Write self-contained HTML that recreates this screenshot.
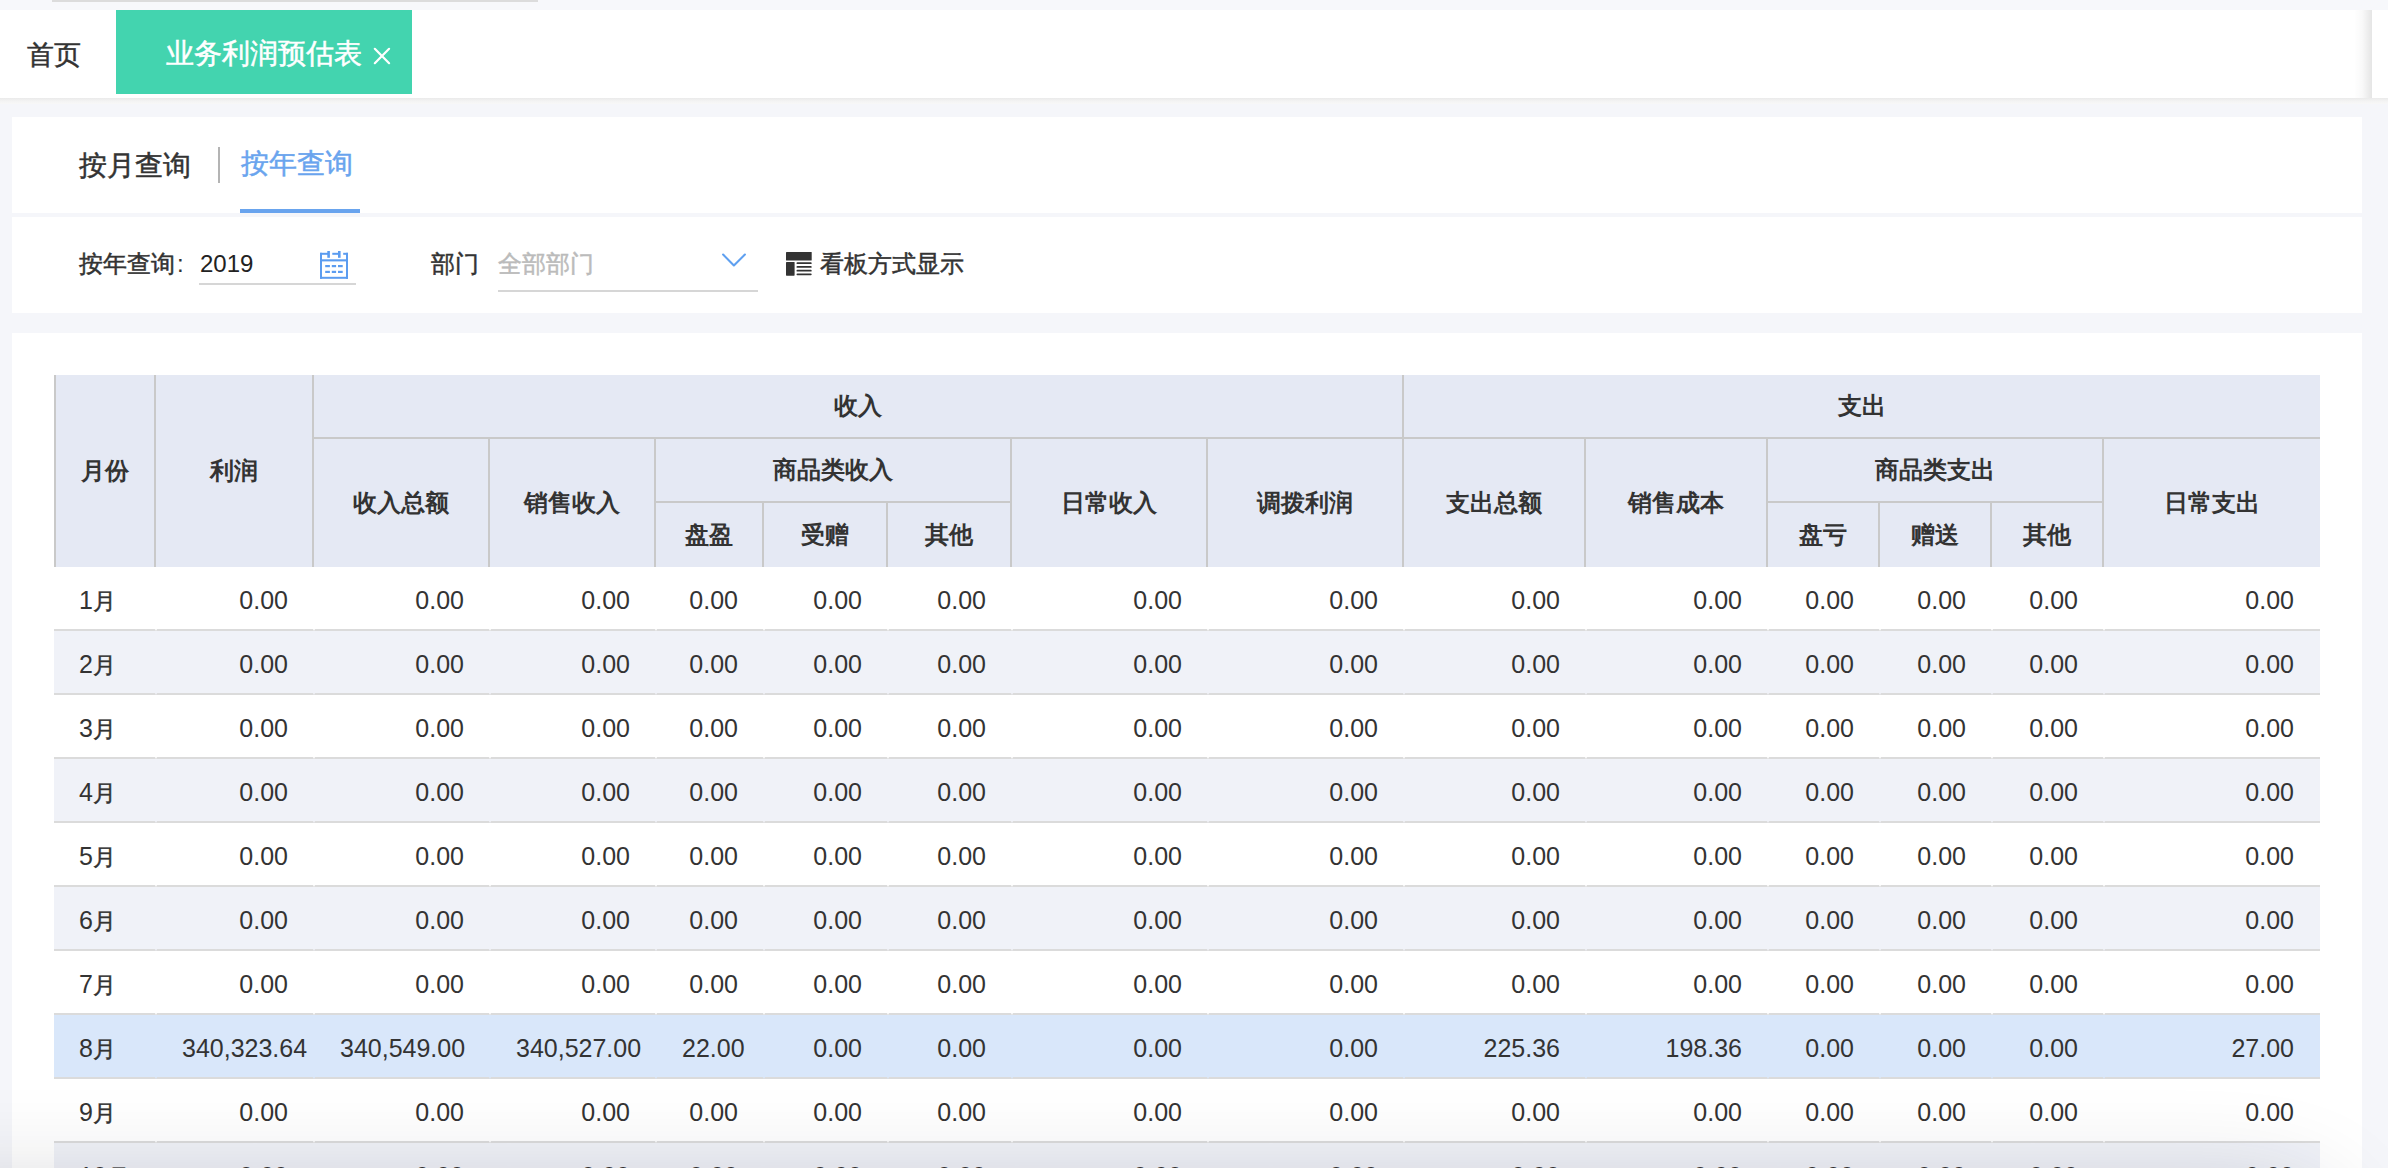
<!DOCTYPE html><html><head><meta charset="utf-8"><style>
*{margin:0;padding:0;box-sizing:border-box}
html,body{width:2388px;height:1168px;overflow:hidden;background:#f5f6fa;font-family:"Liberation Sans",sans-serif;color:#333}
.sk{-webkit-text-stroke:0.5px currentColor}
.a{position:absolute}
.topstrip{left:0;top:0;width:2388px;height:10px;background:#f7f8fb}
.scrollbar{left:52px;top:0;width:486px;height:2px;background:#dcdcdc}
.tabbar{left:0;top:10px;width:2388px;height:88px;background:#fff}
.tbshadow{left:0;top:98px;width:2388px;height:6px;background:linear-gradient(to bottom,#eaeaea,#f3f3f3 50%,#f8f8f8)}
.tabshadow{left:2354px;top:10px;width:18px;height:88px;background:linear-gradient(to right,rgba(0,0,0,0),rgba(0,0,0,0.025) 45%,rgba(0,0,0,0.1))}
.home{left:27px;top:38px;font-size:27px;line-height:34px;color:#333}
.gtab{left:116px;top:10px;width:296px;height:84px;background:#43d4af}
.gtext{left:166px;top:37px;font-size:28px;line-height:34px;color:#fff;white-space:nowrap}
.panel{background:#fff}
.t1{left:79px;top:149px;font-size:28px;line-height:34px;color:#333;white-space:nowrap}
.t2{left:241px;top:147px;font-size:28px;line-height:34px;color:#69a4ee;white-space:nowrap}
.div1{left:218px;top:147px;width:2px;height:36px;background:#b4b4b4}
.uline{left:240px;top:209px;width:120px;height:4px;background:#69a4ee}
.flab{font-size:24px;line-height:30px;color:#333;white-space:nowrap}
.hd{position:absolute;font-size:24px;line-height:30px;font-weight:bold;color:#333;white-space:nowrap;transform:translate(-50%,-50%)}
.hl{position:absolute;background:#c9c9c9}
.row{position:absolute;left:54px;width:2266px;height:64px}
.c{position:absolute;top:0;height:64px;border-bottom:2px solid #dbdbdb;border-left:1px solid transparent;border-right:1px solid transparent;font-size:25px;line-height:62px;padding:2px 25px 0 25px;text-align:right;white-space:nowrap}
.c.last{padding-right:26px;border-right:0}
.c.first{text-align:left;padding-left:25px;border-left:0}
.c i{font-style:normal;font-size:23px;-webkit-text-stroke:0.45px currentColor}
.fade{left:-300px;top:1200px;width:2630px;height:300px;background:#888;box-shadow:0 0 110px 0 rgba(30,30,40,0.24);border-radius:60px}
</style></head><body><div class="a topstrip"></div><div class="a scrollbar"></div>
<div class="a tabbar"></div><div class="a tbshadow"></div><div class="a tabshadow"></div>
<div class="a home sk">首页</div>
<div class="a gtab"></div><div class="a gtext sk">业务利润预估表</div><svg class="a" style="left:370px;top:44px" width="24" height="24" viewBox="0 0 24 24"><path d="M4.8 4.8 L19.1 19.2 M19.1 4.8 L4.8 19.2" stroke="#fff" stroke-width="2.2" stroke-linecap="round"/></svg>
<div class="a panel" style="left:12px;top:117px;width:2350px;height:96px"></div>
<div class="a panel" style="left:12px;top:217px;width:2350px;height:96px"></div>
<div class="a panel" style="left:12px;top:333px;width:2350px;height:835px"></div>
<div class="a t1 sk">按月查询</div><div class="a div1"></div><div class="a t2 sk">按年查询</div><div class="a uline"></div>
<div class="a flab sk" style="left:79px;top:249px">按年查询</div><div class="a flab" style="left:177px;top:249px">:</div>
<div class="a flab" style="left:200px;top:249px;color:#222">2019</div>
<div class="a" style="left:199px;top:283px;width:157px;height:2px;background:#d6d6d6"></div>
<svg class="a" style="left:320px;top:251px" width="28" height="28" viewBox="0 0 28 28"><g fill="#5b9cf0"><rect x="0" y="1.8" width="2" height="26"/><rect x="26" y="1.8" width="2" height="26"/><rect x="0" y="25.8" width="28" height="2"/><rect x="0" y="1.8" width="8" height="2"/><rect x="12.3" y="1.8" width="6" height="2"/><rect x="23.2" y="1.8" width="4.8" height="2"/><rect x="7.3" y="0" width="2.6" height="6.8"/><rect x="18" y="0" width="2.6" height="6.8"/><rect x="0" y="8.3" width="28" height="2.1"/><rect x="5.2" y="14" width="4.7" height="2.2"/><rect x="11.8" y="14" width="4.3" height="2.2"/><rect x="18" y="14" width="4.7" height="2.2"/><rect x="5.2" y="19.8" width="4.7" height="2.2"/><rect x="11.8" y="19.8" width="4.3" height="2.2"/><rect x="18" y="19.8" width="4.7" height="2.2"/></g></svg>
<div class="a flab sk" style="left:431px;top:249px">部门</div>
<div class="a flab sk" style="left:498px;top:249px;color:#bbb">全部部门</div>
<div class="a" style="left:498px;top:290px;width:260px;height:2px;background:#d6d6d6"></div>
<svg class="a" style="left:710px;top:240px" width="50" height="40" viewBox="0 0 50 40"><path d="M13.1 14.6 L23.9 25.4 L34.9 14.6" fill="none" stroke="#5fa0f0" stroke-width="2.1" stroke-linecap="round" stroke-linejoin="round"/></svg>
<svg class="a" style="left:786px;top:252px" width="26" height="24" viewBox="0 0 26 24"><g fill="#333"><rect x="0" y="0" width="25.7" height="8.5" rx="0.6"/><rect x="0" y="10" width="8.6" height="13.7" rx="0.6"/></g><g stroke="#333" stroke-width="1.8" stroke-linecap="round"><path d="M11.4 11.2H24.8M11.4 14.9H24.8M11.4 18.7H24.8M11.4 22.3H24.8"/></g></svg>
<div class="a flab sk" style="left:820px;top:249px">看板方式显示</div>
<div class="a" style="left:54px;top:375px;width:2266px;height:192px;background:#e5e9f4"></div>
<div class="hl" style="left:54px;top:375px;width:2px;height:192px"></div>
<div class="hl" style="left:154px;top:375px;width:2px;height:192px"></div>
<div class="hl" style="left:312px;top:375px;width:2px;height:192px"></div>
<div class="hl" style="left:488px;top:439px;width:2px;height:128px"></div>
<div class="hl" style="left:654px;top:439px;width:2px;height:128px"></div>
<div class="hl" style="left:762px;top:503px;width:2px;height:64px"></div>
<div class="hl" style="left:886px;top:503px;width:2px;height:64px"></div>
<div class="hl" style="left:1010px;top:439px;width:2px;height:128px"></div>
<div class="hl" style="left:1206px;top:439px;width:2px;height:128px"></div>
<div class="hl" style="left:1402px;top:375px;width:2px;height:192px"></div>
<div class="hl" style="left:1584px;top:439px;width:2px;height:128px"></div>
<div class="hl" style="left:1766px;top:439px;width:2px;height:128px"></div>
<div class="hl" style="left:1878px;top:503px;width:2px;height:64px"></div>
<div class="hl" style="left:1990px;top:503px;width:2px;height:64px"></div>
<div class="hl" style="left:2102px;top:439px;width:2px;height:128px"></div>
<div class="hl" style="left:312px;top:437px;width:2008px;height:2px"></div>
<div class="hl" style="left:654px;top:501px;width:356px;height:2px"></div>
<div class="hl" style="left:1766px;top:501px;width:336px;height:2px"></div>
<div class="hd" style="left:105.0px;top:471px">月份</div>
<div class="hd" style="left:234.0px;top:471px">利润</div>
<div class="hd" style="left:858.0px;top:406px">收入</div>
<div class="hd" style="left:1862.0px;top:406px">支出</div>
<div class="hd" style="left:401.0px;top:503px">收入总额</div>
<div class="hd" style="left:572.0px;top:503px">销售收入</div>
<div class="hd" style="left:833.0px;top:470px">商品类收入</div>
<div class="hd" style="left:709.0px;top:535px">盘盈</div>
<div class="hd" style="left:825.0px;top:535px">受赠</div>
<div class="hd" style="left:949.0px;top:535px">其他</div>
<div class="hd" style="left:1109.0px;top:503px">日常收入</div>
<div class="hd" style="left:1305.0px;top:503px">调拨利润</div>
<div class="hd" style="left:1494.0px;top:503px">支出总额</div>
<div class="hd" style="left:1676.0px;top:503px">销售成本</div>
<div class="hd" style="left:1935.0px;top:470px">商品类支出</div>
<div class="hd" style="left:1823.0px;top:535px">盘亏</div>
<div class="hd" style="left:1935.0px;top:535px">赠送</div>
<div class="hd" style="left:2047.0px;top:535px">其他</div>
<div class="hd" style="left:2212.0px;top:503px">日常支出</div>
<div class="row" style="top:567px;background:#fff"><div class="c first" style="left:0px;width:102px">1<i>月</i></div><div class="c" style="left:102px;width:158px">0.00</div><div class="c" style="left:260px;width:176px">0.00</div><div class="c" style="left:436px;width:166px">0.00</div><div class="c" style="left:602px;width:108px">0.00</div><div class="c" style="left:710px;width:124px">0.00</div><div class="c" style="left:834px;width:124px">0.00</div><div class="c" style="left:958px;width:196px">0.00</div><div class="c" style="left:1154px;width:196px">0.00</div><div class="c" style="left:1350px;width:182px">0.00</div><div class="c" style="left:1532px;width:182px">0.00</div><div class="c" style="left:1714px;width:112px">0.00</div><div class="c" style="left:1826px;width:112px">0.00</div><div class="c" style="left:1938px;width:112px">0.00</div><div class="c last" style="left:2050px;width:216px">0.00</div></div>
<div class="row" style="top:631px;background:#f0f2f8"><div class="c first" style="left:0px;width:102px">2<i>月</i></div><div class="c" style="left:102px;width:158px">0.00</div><div class="c" style="left:260px;width:176px">0.00</div><div class="c" style="left:436px;width:166px">0.00</div><div class="c" style="left:602px;width:108px">0.00</div><div class="c" style="left:710px;width:124px">0.00</div><div class="c" style="left:834px;width:124px">0.00</div><div class="c" style="left:958px;width:196px">0.00</div><div class="c" style="left:1154px;width:196px">0.00</div><div class="c" style="left:1350px;width:182px">0.00</div><div class="c" style="left:1532px;width:182px">0.00</div><div class="c" style="left:1714px;width:112px">0.00</div><div class="c" style="left:1826px;width:112px">0.00</div><div class="c" style="left:1938px;width:112px">0.00</div><div class="c last" style="left:2050px;width:216px">0.00</div></div>
<div class="row" style="top:695px;background:#fff"><div class="c first" style="left:0px;width:102px">3<i>月</i></div><div class="c" style="left:102px;width:158px">0.00</div><div class="c" style="left:260px;width:176px">0.00</div><div class="c" style="left:436px;width:166px">0.00</div><div class="c" style="left:602px;width:108px">0.00</div><div class="c" style="left:710px;width:124px">0.00</div><div class="c" style="left:834px;width:124px">0.00</div><div class="c" style="left:958px;width:196px">0.00</div><div class="c" style="left:1154px;width:196px">0.00</div><div class="c" style="left:1350px;width:182px">0.00</div><div class="c" style="left:1532px;width:182px">0.00</div><div class="c" style="left:1714px;width:112px">0.00</div><div class="c" style="left:1826px;width:112px">0.00</div><div class="c" style="left:1938px;width:112px">0.00</div><div class="c last" style="left:2050px;width:216px">0.00</div></div>
<div class="row" style="top:759px;background:#f0f2f8"><div class="c first" style="left:0px;width:102px">4<i>月</i></div><div class="c" style="left:102px;width:158px">0.00</div><div class="c" style="left:260px;width:176px">0.00</div><div class="c" style="left:436px;width:166px">0.00</div><div class="c" style="left:602px;width:108px">0.00</div><div class="c" style="left:710px;width:124px">0.00</div><div class="c" style="left:834px;width:124px">0.00</div><div class="c" style="left:958px;width:196px">0.00</div><div class="c" style="left:1154px;width:196px">0.00</div><div class="c" style="left:1350px;width:182px">0.00</div><div class="c" style="left:1532px;width:182px">0.00</div><div class="c" style="left:1714px;width:112px">0.00</div><div class="c" style="left:1826px;width:112px">0.00</div><div class="c" style="left:1938px;width:112px">0.00</div><div class="c last" style="left:2050px;width:216px">0.00</div></div>
<div class="row" style="top:823px;background:#fff"><div class="c first" style="left:0px;width:102px">5<i>月</i></div><div class="c" style="left:102px;width:158px">0.00</div><div class="c" style="left:260px;width:176px">0.00</div><div class="c" style="left:436px;width:166px">0.00</div><div class="c" style="left:602px;width:108px">0.00</div><div class="c" style="left:710px;width:124px">0.00</div><div class="c" style="left:834px;width:124px">0.00</div><div class="c" style="left:958px;width:196px">0.00</div><div class="c" style="left:1154px;width:196px">0.00</div><div class="c" style="left:1350px;width:182px">0.00</div><div class="c" style="left:1532px;width:182px">0.00</div><div class="c" style="left:1714px;width:112px">0.00</div><div class="c" style="left:1826px;width:112px">0.00</div><div class="c" style="left:1938px;width:112px">0.00</div><div class="c last" style="left:2050px;width:216px">0.00</div></div>
<div class="row" style="top:887px;background:#f0f2f8"><div class="c first" style="left:0px;width:102px">6<i>月</i></div><div class="c" style="left:102px;width:158px">0.00</div><div class="c" style="left:260px;width:176px">0.00</div><div class="c" style="left:436px;width:166px">0.00</div><div class="c" style="left:602px;width:108px">0.00</div><div class="c" style="left:710px;width:124px">0.00</div><div class="c" style="left:834px;width:124px">0.00</div><div class="c" style="left:958px;width:196px">0.00</div><div class="c" style="left:1154px;width:196px">0.00</div><div class="c" style="left:1350px;width:182px">0.00</div><div class="c" style="left:1532px;width:182px">0.00</div><div class="c" style="left:1714px;width:112px">0.00</div><div class="c" style="left:1826px;width:112px">0.00</div><div class="c" style="left:1938px;width:112px">0.00</div><div class="c last" style="left:2050px;width:216px">0.00</div></div>
<div class="row" style="top:951px;background:#fff"><div class="c first" style="left:0px;width:102px">7<i>月</i></div><div class="c" style="left:102px;width:158px">0.00</div><div class="c" style="left:260px;width:176px">0.00</div><div class="c" style="left:436px;width:166px">0.00</div><div class="c" style="left:602px;width:108px">0.00</div><div class="c" style="left:710px;width:124px">0.00</div><div class="c" style="left:834px;width:124px">0.00</div><div class="c" style="left:958px;width:196px">0.00</div><div class="c" style="left:1154px;width:196px">0.00</div><div class="c" style="left:1350px;width:182px">0.00</div><div class="c" style="left:1532px;width:182px">0.00</div><div class="c" style="left:1714px;width:112px">0.00</div><div class="c" style="left:1826px;width:112px">0.00</div><div class="c" style="left:1938px;width:112px">0.00</div><div class="c last" style="left:2050px;width:216px">0.00</div></div>
<div class="row" style="top:1015px;background:#d9e7fa"><div class="c first" style="left:0px;width:102px">8<i>月</i></div><div class="c" style="left:102px;width:158px">340,323.64</div><div class="c" style="left:260px;width:176px">340,549.00</div><div class="c" style="left:436px;width:166px">340,527.00</div><div class="c" style="left:602px;width:108px">22.00</div><div class="c" style="left:710px;width:124px">0.00</div><div class="c" style="left:834px;width:124px">0.00</div><div class="c" style="left:958px;width:196px">0.00</div><div class="c" style="left:1154px;width:196px">0.00</div><div class="c" style="left:1350px;width:182px">225.36</div><div class="c" style="left:1532px;width:182px">198.36</div><div class="c" style="left:1714px;width:112px">0.00</div><div class="c" style="left:1826px;width:112px">0.00</div><div class="c" style="left:1938px;width:112px">0.00</div><div class="c last" style="left:2050px;width:216px">27.00</div></div>
<div class="row" style="top:1079px;background:#fff"><div class="c first" style="left:0px;width:102px">9<i>月</i></div><div class="c" style="left:102px;width:158px">0.00</div><div class="c" style="left:260px;width:176px">0.00</div><div class="c" style="left:436px;width:166px">0.00</div><div class="c" style="left:602px;width:108px">0.00</div><div class="c" style="left:710px;width:124px">0.00</div><div class="c" style="left:834px;width:124px">0.00</div><div class="c" style="left:958px;width:196px">0.00</div><div class="c" style="left:1154px;width:196px">0.00</div><div class="c" style="left:1350px;width:182px">0.00</div><div class="c" style="left:1532px;width:182px">0.00</div><div class="c" style="left:1714px;width:112px">0.00</div><div class="c" style="left:1826px;width:112px">0.00</div><div class="c" style="left:1938px;width:112px">0.00</div><div class="c last" style="left:2050px;width:216px">0.00</div></div>
<div class="row" style="top:1143px;background:#f0f2f8"><div class="c first" style="left:0px;width:102px">10<i>月</i></div><div class="c" style="left:102px;width:158px">0.00</div><div class="c" style="left:260px;width:176px">0.00</div><div class="c" style="left:436px;width:166px">0.00</div><div class="c" style="left:602px;width:108px">0.00</div><div class="c" style="left:710px;width:124px">0.00</div><div class="c" style="left:834px;width:124px">0.00</div><div class="c" style="left:958px;width:196px">0.00</div><div class="c" style="left:1154px;width:196px">0.00</div><div class="c" style="left:1350px;width:182px">0.00</div><div class="c" style="left:1532px;width:182px">0.00</div><div class="c" style="left:1714px;width:112px">0.00</div><div class="c" style="left:1826px;width:112px">0.00</div><div class="c" style="left:1938px;width:112px">0.00</div><div class="c last" style="left:2050px;width:216px">0.00</div></div>
<div class="a fade"></div></body></html>
